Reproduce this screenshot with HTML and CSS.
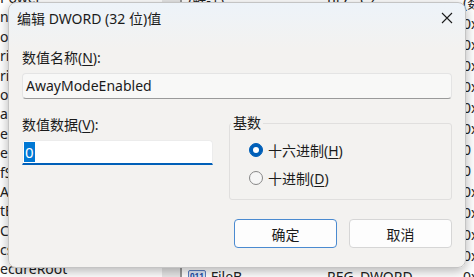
FILE: index.html
```html
<!DOCTYPE html>
<html lang="zh-CN">
<head>
  <meta charset="UTF-8" />
  <title>编辑 DWORD (32 位)值</title>
  <link rel="stylesheet" href="styles.css">
</head>
<body>

  <div class="desktop">
    <!-- regedit window behind the dialog -->
    <div class="regedit">
      <div class="tree">
        <div class="tree-rows">
          <div class="tree-row">Power</div>
          <div class="tree-row">nfo</div>
          <div class="tree-row">owerSettings</div>
          <div class="tree-row">riorityControl</div>
          <div class="tree-row">ricingPolicy</div>
          <div class="tree-row">oductOptions</div>
          <div class="tree-row">acyRules</div>
          <div class="tree-row">eremote</div>
          <div class="tree-row">etupInfo</div>
          <div class="tree-row">fSolution</div>
          <div class="tree-row">AllowList</div>
          <div class="tree-row">tEngine</div>
          <div class="tree-row">CMConfig</div>
          <div class="tree-row">csVersion</div>
          <div class="tree-row">ecureRoot</div>
        </div>
        <div class="tree-scroll"></div>
      </div>
      <div class="splitter"></div>
      <div class="list">
        <div class="list-row"><span class="c-name">(默认)</span><span class="c-type">REG_SZ</span><span class="c-data">(数值未设置)</span></div>
        <div class="list-row"><span class="c-name">AllowHybrid</span><span class="c-type">REG_DWORD</span><span class="c-data">0x00000000 (0)</span></div>
        <div class="list-row"><span class="c-name">AwayMode</span><span class="c-type">REG_DWORD</span><span class="c-data">0x00000000 (0)</span></div>
        <div class="list-row"><span class="c-name">CsEnabled</span><span class="c-type">REG_DWORD</span><span class="c-data">0x00000001 (1)</span></div>
        <div class="list-row"><span class="c-name">EnergyEst</span><span class="c-type">REG_DWORD</span><span class="c-data">0x00000001 (1)</span></div>
        <div class="list-row"><span class="c-name">EventProc</span><span class="c-type">REG_DWORD</span><span class="c-data">0x00000001 (1)</span></div>
        <div class="list-row"><span class="c-name">Hiber</span><span class="c-type">REG_DWORD</span><span class="c-data">0x00000001 (1)</span></div>
        <div class="list-row"><span class="c-name">HiberFile</span><span class="c-type">REG_DWORD</span><span class="c-data">0 (0)</span></div>
        <div class="list-row"><span class="c-name">Hyper</span><span class="c-type">REG_DWORD</span><span class="c-data">0 (0)</span></div>
        <div class="list-row"><span class="c-name">Lid</span><span class="c-type">REG_DWORD</span><span class="c-data">0x00000001 (1)</span></div>
        <div class="list-row"><span class="c-name">Monitor</span><span class="c-type">REG_DWORD</span><span class="c-data">0x00000001 (1)</span></div>
        <div class="list-row"><span class="c-name">Perf</span><span class="c-type">REG_DWORD</span><span class="c-data">0x00000001 (1)</span></div>
        <div class="list-row"><span class="c-name">Sleep</span><span class="c-type">REG_DWORD</span><span class="c-data">0x00000001 (1)</span></div>
        <div class="list-row"><span class="c-name"><span class="reg-icon">011</span>FileB</span><span class="c-type">REG_DWORD</span><span class="c-data">0x00000000 (0)</span></div>
      </div>
    </div>

    <!-- dialog -->
    <div class="dialog">
      <div class="titlebar">
        <span class="title">编辑 DWORD (32 位)值</span>
        <svg class="close" width="12" height="12" viewBox="0 0 12 12">
          <path d="M1 1 L11 11 M11 1 L1 11" stroke="#1b1b1b" stroke-width="1.1" fill="none"/>
        </svg>
      </div>

      <div class="content">
        <div class="label">数值名称(<u>N</u>):</div>
        <div class="field field-name">AwayModeEnabled</div>

        <div class="row">
          <div class="col-data">
            <div class="label">数值数据(<u>V</u>):</div>
            <div class="field field-data"><span class="sel">0</span></div>
          </div>

          <fieldset class="group">
            <legend>基数</legend>
            <div class="radio-row">
              <span class="radio on"></span>
              <span>十六进制(<u>H</u>)</span>
            </div>
            <div class="radio-row">
              <span class="radio"></span>
              <span>十进制(<u>D</u>)</span>
            </div>
          </fieldset>
        </div>

        <div class="buttons">
          <button class="btn btn-ok">确定</button>
          <button class="btn">取消</button>
        </div>
      </div>
    </div>
  </div>

</body>
</html>
```

FILE: styles.css
```css
body {
  margin: 0;
  font-family: "Noto Sans", "Noto Sans CJK SC", sans-serif;
  color: #1b1b1b;
}

.desktop {
  position: relative;
  width: 474px;
  height: 277px;
  overflow: hidden;
  background: #fff;
}

/* regedit behind */

.regedit {
  display: flex;
  height: 100%;
  font-size: 14px;
  color: #222;
}

.tree {
  width: 180px;
  display: flex;
}

.tree-rows {
  flex: 1;
  margin-top: -12px;
  overflow: hidden;
}

.tree-row {
  height: 19.4px;
  line-height: 19.4px;
  white-space: nowrap;
}

.tree-scroll {
  width: 18px;
  background: #e8e8e8;
}

.splitter {
  width: 2px;
  background: #9a9a9a;
}

.list {
  flex: 1;
  margin-top: -8.5px;
  padding-left: 6px;
  overflow: hidden;
}

.list-row {
  display: flex;
  height: 21.1px;
  line-height: 21.1px;
  white-space: nowrap;
}

.c-name {
  width: 139px;
  flex: none;
  display: flex;
  align-items: center;
}

.c-type {
  width: 136px;
  flex: none;
}

.reg-icon {
  font-size: 8px;
  font-weight: bold;
  color: #1c4fa8;
  background: #dfe8f7;
  border: 1px solid #5a7fc4;
  border-radius: 2px;
  line-height: 10px;
  padding: 0 1px;
  margin-right: 5px;
}

/* dialog */

.dialog {
  position: absolute;
  left: 8px;
  top: 2px;
  width: 458px;
  height: 266px;
  box-sizing: border-box;
  border: 1px solid #c4c4c4;
  border-radius: 8px;
  background: linear-gradient(#edf3f9, #f3f2f0 45px, #f3f2f0);
  box-shadow: 0 3px 12px rgba(0, 0, 0, 0.3);
  display: flex;
  flex-direction: column;
  font-family: "Noto Sans", "Noto Sans CJK SC", sans-serif;
  font-size: 14px;
}

.titlebar {
  height: 30px;
  display: flex;
  align-items: center;
  justify-content: space-between;
  padding-left: 8px;
  padding-right: 12px;
}

.title {
  font-size: 14px;
}

.content {
  padding: 15px 13px 0 13px;
  display: flex;
  flex-direction: column;
}

.label {
  height: 20px;
  line-height: 20px;
}

u {
  text-underline-offset: 2px;
}

.field {
  box-sizing: border-box;
  height: 26px;
  line-height: 24px;
  margin-top: 5px;
}

.field-name {
  background: #f8f8f7;
  border: 1px solid #e4e4e4;
  border-bottom-color: #9a9a9a;
  border-radius: 4px;
  padding-left: 3px;
  color: #1b1b1b;
}

.row {
  display: flex;
  gap: 16px;
  margin-top: 16px;
}

.col-data {
  width: 191px;
}

.field-data {
  height: 25px;
  background: #fff;
  border: 1px solid #ececec;
  border-bottom: 2px solid #005fb8;
  border-radius: 4px 4px 0 0;
  padding-left: 1px;
  line-height: 22px;
  font-size: 15px;
}

.sel {
  background: #0078d4;
  color: #fff;
  padding: 0 1px;
}

.group {
  margin: -2px 0 0 0;
  width: 223px;
  height: 87px;
  box-sizing: border-box;
  border: 1px solid #e0dfde;
  border-radius: 3px;
  padding: 7px 0 0 19px;
}

.group legend {
  padding: 0 2px;
  margin-left: -18px;
  line-height: 20px;
}

.radio-row {
  display: flex;
  align-items: center;
  gap: 5px;
  height: 20px;
  margin-bottom: 8px;
}

.radio {
  width: 14px;
  height: 14px;
  box-sizing: border-box;
  border-radius: 50%;
  border: 1px solid #878787;
  background: #f6f6f6;
  display: flex;
  align-items: center;
  justify-content: center;
}

.radio.on {
  border-color: #005fb8;
  background: #005fb8;
}

.radio.on::after {
  content: "";
  width: 6px;
  height: 6px;
  border-radius: 50%;
  background: #fff;
}

.buttons {
  display: flex;
  justify-content: flex-end;
  gap: 12px;
  margin-top: 19px;
}

.btn {
  width: 103px;
  height: 29px;
  font-family: inherit;
  font-size: 14px;
  color: #1b1b1b;
  background: #fdfdfd;
  border: 1px solid #d6d6d6;
  border-radius: 4px;
}

.btn-ok {
  border-color: #4a8ad0;
}
```
